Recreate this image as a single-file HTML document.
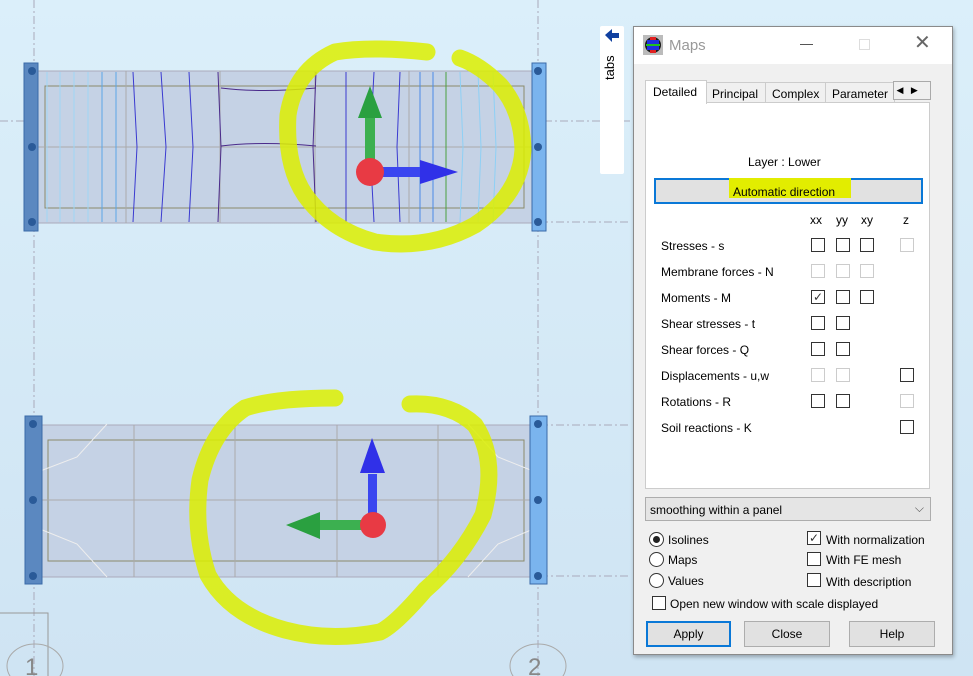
<!DOCTYPE html>
<html><head><meta charset="utf-8"><style>
*{margin:0;padding:0;box-sizing:border-box}
body{width:973px;height:676px;overflow:hidden;position:relative;font-family:"Liberation Sans",sans-serif;font-size:12px;color:#000;background:linear-gradient(#dbeffa,#cfe4f3)}
.a{position:absolute}
.cb{position:absolute;width:14px;height:14px;border:1px solid #333;background:#fff}
.cb.d{border-color:#ccc}
.lbl{position:absolute;left:661px;font-size:12px}
.btn{position:absolute;height:26px;border:1px solid #adadad;background:#e1e1e1;text-align:center;line-height:24px;font-size:12px}
.rad{position:absolute;width:15px;height:15px;border:1px solid #333;border-radius:50%;background:#fff}
</style></head><body>
<svg class="a" style="left:0;top:0" width="630" height="676">
<g stroke="#aab" stroke-dasharray="8,3,2,3" stroke-width="1">
<line x1="34" y1="0" x2="34" y2="676"/><line x1="538" y1="0" x2="538" y2="676"/>
<line x1="0" y1="121" x2="630" y2="121"/><line x1="540" y1="222" x2="630" y2="222"/>
<line x1="540" y1="425" x2="630" y2="425"/><line x1="540" y1="576" x2="630" y2="576"/>
</g>
<rect x="34" y="71" width="504" height="152" fill="#c5d2e5" stroke="#aab" />
<rect x="45" y="86" width="479" height="122" fill="none" stroke="#8a8a6a"/>
<line x1="34" y1="147" x2="538" y2="147" stroke="#aaa"/>
<g stroke="#aaa"><line x1="126" y1="71" x2="126" y2="223"/><line x1="220" y1="71" x2="220" y2="223"/><line x1="315" y1="71" x2="315" y2="223"/><line x1="409" y1="71" x2="409" y2="223"/></g>
<g stroke-width="1" fill="none">
<path d="M47 72v150M60 72v150M74 72v150M88 72v150" stroke="#9fd6f5"/>
<path d="M102 72v150M116 72v150" stroke="#5aa6e8"/>
<path d="M133 72l4 75-4 75M161 72l5 75-5 75M189 72l4 75-4 75" stroke="#3a3ad0"/>
<path d="M218 72l3 75-3 75M316 72l-3 75 3 75" stroke="#4a2a8a"/>
<path d="M221 88q40 5 95 0M221 146q40-5 95 0" stroke="#4a2a8a"/>
<path d="M346 72v150M374 72l-4 75 4 75M400 72l-3 75 3 75" stroke="#3a3ad0"/>
<path d="M420 72v150M433 72v150" stroke="#4a8ae8"/>
<path d="M446 72v150" stroke="#4aa040"/><path d="M460 72l3 75-3 75M478 72l3 75-3 75M493 72l3 75-3 75" stroke="#8ed0f5"/>
</g>
<rect x="24" y="63" width="14" height="168" fill="#5b88c0" stroke="#3a6aa8"/>
<rect x="532" y="63" width="14" height="168" fill="#7ab4ee" stroke="#3a6aa8"/>
<g fill="#2a5a98"><circle cx="32" cy="71" r="4"/><circle cx="32" cy="147" r="4"/><circle cx="32" cy="222" r="4"/><circle cx="538" cy="71" r="4"/><circle cx="538" cy="147" r="4"/><circle cx="538" cy="222" r="4"/></g>
<rect x="365" y="115" width="10" height="55" fill="#3cb050"/><polygon points="370,86 358,118 382,118" fill="#2aa040"/>
<rect x="375" y="167" width="50" height="10" fill="#3a46f0"/><polygon points="420,160 458,172 420,184" fill="#3030e8"/>
<circle cx="370" cy="172" r="14" fill="#e83a44"/>
<rect x="30" y="425" width="508" height="152" fill="#c5d2e5" stroke="#aab"/>
<rect x="48" y="440" width="476" height="121" fill="none" stroke="#8a8a6a"/>
<line x1="30" y1="500" x2="538" y2="500" stroke="#aaa"/>
<g stroke="#aaa"><line x1="134" y1="425" x2="134" y2="577"/><line x1="235" y1="425" x2="235" y2="577"/><line x1="337" y1="425" x2="337" y2="577"/><line x1="438" y1="425" x2="438" y2="577"/></g>
<g stroke="#eee" fill="none"><path d="M35 473l42-16 30-33M35 527l42 17 30 33M538 473l-40-16-30-33M538 527l-40 17-30 33"/></g>
<rect x="25" y="416" width="17" height="168" fill="#5b88c0" stroke="#3a6aa8"/>
<rect x="530" y="416" width="17" height="168" fill="#7ab4ee" stroke="#3a6aa8"/>
<g fill="#2a5a98"><circle cx="33" cy="424" r="4"/><circle cx="33" cy="500" r="4"/><circle cx="33" cy="576" r="4"/><circle cx="538" cy="424" r="4"/><circle cx="538" cy="500" r="4"/><circle cx="538" cy="576" r="4"/></g>
<rect x="368" y="474" width="9" height="45" fill="#3a46f0"/><polygon points="372,438 360,473 385,473" fill="#3030e8"/>
<rect x="320" y="520" width="50" height="10" fill="#3cb050"/><polygon points="286,525 320,512 320,539" fill="#2aa040"/>
<circle cx="373" cy="525" r="13" fill="#e83a44"/>
<g fill="none" stroke="#dcee00" stroke-width="17" opacity="0.85" stroke-linecap="round" stroke-linejoin="round">
<path d="M427 52Q370 46 335 52Q295 70 288 115Q285 165 305 195Q330 230 375 242Q430 250 475 225Q520 195 523 150Q522 110 500 85Q480 65 460 58"/>
<path d="M410 404Q450 402 475 425Q498 460 483 515Q460 560 425 590Q395 625 380 632Q330 642 285 630Q230 615 208 575Q193 530 200 480Q212 430 245 408Q275 398 335 398"/>
</g>
<path d="M0 613h48v63" fill="none" stroke="#999"/>
<ellipse cx="35" cy="666" rx="28" ry="22" fill="none" stroke="#aaa"/>
<ellipse cx="538" cy="666" rx="28" ry="22" fill="none" stroke="#aaa"/>
<text x="25" y="675" font-family="Liberation Sans" font-size="24" fill="#888">1</text>
<text x="528" y="675" font-family="Liberation Sans" font-size="24" fill="#888">2</text>
</svg>
<div class="a" style="left:600px;top:26px;width:24px;height:148px;background:#fff;border-radius:2px"></div>
<svg class="a" style="left:604px;top:28px" width="16" height="16"><polygon points="1,7 8,1 8,5 15,5 15,10 8,10 8,14" fill="#1040a0"/></svg>
<div class="a" style="left:602px;top:50px;width:20px;height:30px;font-size:13px;writing-mode:vertical-rl;transform:rotate(180deg);text-align:left">tabs</div>
<div class="a" style="left:633px;top:26px;width:320px;height:629px;background:#f0f0f0;border:1px solid #8a8a8a;box-shadow:1px 2px 4px rgba(0,0,0,.3)">
 <div class="a" style="left:0;top:0;width:318px;height:37px;background:#fff"></div>
 <svg class="a" style="left:9px;top:8px" width="20" height="20"><rect width="20" height="20" fill="#bbb"/><circle cx="10" cy="10" r="8" fill="#1a1a1a"/><rect x="4" y="5" width="12" height="10" fill="#2030e0"/><rect x="3" y="9" width="14" height="2" fill="#20c020"/><rect x="7" y="2" width="6" height="3" fill="#e02020"/><rect x="7" y="15" width="6" height="3" fill="#e02020"/></svg>
 <div class="a" style="left:35px;top:10px;font-size:15px;color:#999">Maps</div>
 <div class="a" style="left:166px;top:17px;width:13px;height:1px;background:#555"></div>
 <div class="a" style="left:225px;top:12px;width:11px;height:11px;border:1px solid #ddd"></div>
 <div class="a" style="left:280px;top:3px;font-size:20px;color:#666">✕</div>
</div>
<div class="a" style="left:645px;top:80px;width:62px;height:24px;background:#fff;border:1px solid #ccc;border-bottom:none;padding:4px 0 0 7px;z-index:2">Detailed</div>
<div class="a" style="left:706px;top:82px;width:60px;height:21px;background:#f0f0f0;border:1px solid #ccc;padding:4px 0 0 5px">Principal</div>
<div class="a" style="left:765px;top:82px;width:61px;height:21px;background:#f0f0f0;border:1px solid #ccc;padding:4px 0 0 6px">Complex</div>
<div class="a" style="left:825px;top:82px;width:70px;height:21px;background:#f0f0f0;border:1px solid #ccc;padding:4px 0 0 6px;overflow:hidden;white-space:nowrap">Parameter</div>
<div class="a" style="left:893px;top:81px;width:38px;height:19px;border:1px solid #aaa;background:#f0f0f0;font-size:9px;line-height:17px">&nbsp;◀ &nbsp;&nbsp;▶</div>
<div class="a" style="left:645px;top:102px;width:285px;height:387px;background:#fff;border:1px solid #ccc"></div>
<div class="a" style="left:748px;top:155px">Layer : Lower</div>
<div class="a" style="left:654px;top:178px;width:269px;height:26px;background:#e1e1e1;border:2px solid #0a78d7"></div>
<div class="a" style="left:729px;top:178px;width:122px;height:20px;background:#e2ed00"></div>
<div class="a" style="left:733px;top:185px">Automatic direction</div>
<div class="a" style="left:810px;top:213px">xx</div><div class="a" style="left:836px;top:213px">yy</div><div class="a" style="left:861px;top:213px">xy</div><div class="a" style="left:903px;top:213px">z</div>
<div class="lbl" style="top:239px">Stresses - s</div>
<div class="lbl" style="top:265px">Membrane forces - N</div>
<div class="lbl" style="top:291px">Moments - M</div>
<div class="lbl" style="top:317px">Shear stresses - t</div>
<div class="lbl" style="top:343px">Shear forces - Q</div>
<div class="lbl" style="top:369px">Displacements - u,w</div>
<div class="lbl" style="top:395px">Rotations - R</div>
<div class="lbl" style="top:421px">Soil reactions - K</div>
<div class="cb" style="left:811px;top:238px"></div><div class="cb" style="left:836px;top:238px"></div><div class="cb" style="left:860px;top:238px"></div><div class="cb d" style="left:900px;top:238px"></div>
<div class="cb d" style="left:811px;top:264px"></div><div class="cb d" style="left:836px;top:264px"></div><div class="cb d" style="left:860px;top:264px"></div>
<div class="cb" style="left:811px;top:290px;font-size:12px;line-height:12px;text-align:center;color:#333">✓</div><div class="cb" style="left:836px;top:290px"></div><div class="cb" style="left:860px;top:290px"></div>
<div class="cb" style="left:811px;top:316px"></div><div class="cb" style="left:836px;top:316px"></div>
<div class="cb" style="left:811px;top:342px"></div><div class="cb" style="left:836px;top:342px"></div>
<div class="cb d" style="left:811px;top:368px"></div><div class="cb d" style="left:836px;top:368px"></div><div class="cb" style="left:900px;top:368px"></div>
<div class="cb" style="left:811px;top:394px"></div><div class="cb" style="left:836px;top:394px"></div><div class="cb d" style="left:900px;top:394px"></div>
<div class="cb" style="left:900px;top:420px"></div>
<div class="a" style="left:645px;top:497px;width:286px;height:24px;background:#e5e5e5;border:1px solid #adadad;padding:5px 0 0 4px">smoothing within a panel<span style="position:absolute;right:6px;top:3px;color:#555">⌵</span></div>
<div class="rad" style="left:649px;top:532px"><div class="a" style="left:3px;top:3px;width:7px;height:7px;border-radius:50%;background:#222"></div></div>
<div class="rad" style="left:649px;top:552px"></div><div class="rad" style="left:649px;top:573px"></div>
<div class="a" style="left:668px;top:533px">Isolines</div><div class="a" style="left:668px;top:553px">Maps</div><div class="a" style="left:668px;top:574px">Values</div>
<div class="cb" style="left:807px;top:531px;font-size:12px;line-height:12px;text-align:center;color:#333">✓</div><div class="cb" style="left:807px;top:552px"></div><div class="cb" style="left:807px;top:573px"></div>
<div class="a" style="left:826px;top:533px">With normalization</div><div class="a" style="left:826px;top:553px">With FE mesh</div><div class="a" style="left:826px;top:575px">With description</div>
<div class="cb" style="left:652px;top:596px"></div><div class="a" style="left:670px;top:597px">Open new window with scale displayed</div>
<div class="btn" style="left:646px;top:621px;width:85px;border:2px solid #0a78d7;line-height:22px">Apply</div>
<div class="btn" style="left:744px;top:621px;width:86px">Close</div>
<div class="btn" style="left:849px;top:621px;width:86px">Help</div>
</body></html>
